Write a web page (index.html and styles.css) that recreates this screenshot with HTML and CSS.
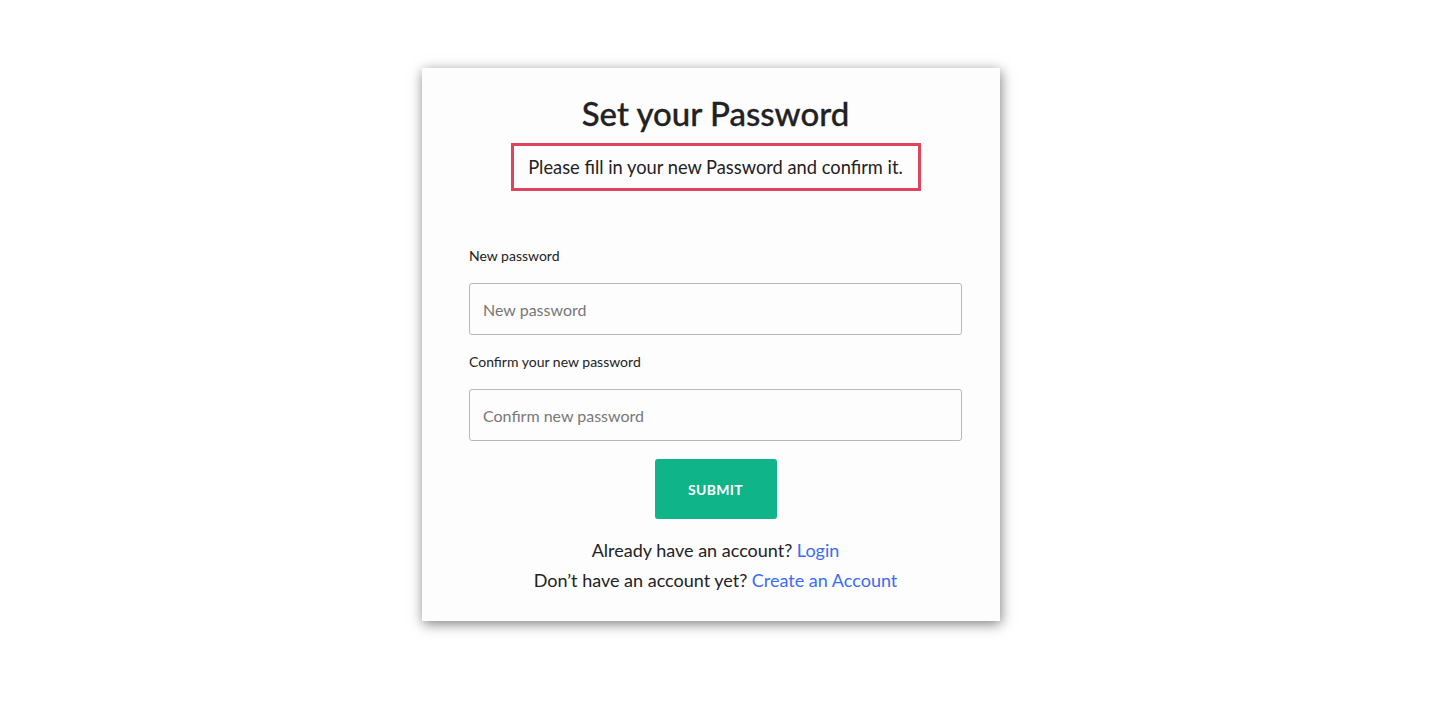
FILE: index.html
```html
<!DOCTYPE html>
<html lang="en">
<head>
<meta charset="utf-8">
<title>Set your Password</title>
<link rel="stylesheet" href="styles.css">
</head>
<body>
<div class="page">
  <div class="card">
    <h1 class="title">Set your Password</h1>
    <div class="notice">Please fill in your new Password and confirm it.</div>
    <form class="form">
      <label class="label" for="pw">New password</label>
      <input class="input" id="pw" type="password" placeholder="New password">
      <label class="label" for="pw2">Confirm your new password</label>
      <input class="input" id="pw2" type="password" placeholder="Confirm new password">
      <div class="actions"><button class="submit" type="button">SUBMIT</button></div>
    </form>
    <p class="alt">Already have an account? <a href="#">Login</a></p>
    <p class="alt">Don’t have an account yet? <a href="#">Create an Account</a></p>
  </div>
</div>
</body>
</html>
```
FILE: styles.css
```css
html, body { margin: 0; padding: 0; background: #ffffff; }
body { font-family: Lato, "Liberation Sans", sans-serif; color: #222; }
.page { padding: 68px 0 60px 422px; }
.card {
  box-sizing: border-box;
  width: 578px;
  height: 553px;
  background: #fdfdfd;
  box-shadow: 1px 3px 12px rgba(0,0,0,0.5);
  padding: 24px 38px 0 47px;
  display: flex;
  flex-direction: column;
  align-items: center;
}
.title { margin: 0; font-size: 33px; font-weight: 500; line-height: 42px; color: #222; -webkit-text-stroke: 0.3px #222; }
.notice {
  margin-top: 9px;
  border: 3px solid #e0435c;
  width: 410px;
  height: 48px;
  box-sizing: border-box;
  display: flex; align-items: center; justify-content: center;
  font-size: 18.3px; color: #222;
}
.form { width: 100%; margin-top: 56px; display: flex; flex-direction: column; }
.label { font-size: 14px; color: #222; line-height: 18px; margin-bottom: 18px; }
.input {
  box-sizing: border-box;
  height: 52px; width: 100%;
  border: 1px solid #b8b8b8; border-radius: 3px;
  padding: 0 13px;
  font-family: inherit; font-size: 16px; color: #222;
  background: #fdfdfd;
  margin-bottom: 18px;
}
.input::placeholder { color: #777; }
.actions { display: flex; justify-content: center; margin-top: 0; }
.submit {
  width: 122px; height: 60px;
  background: #0fb488; color: #fff; border: none; border-radius: 3px;
  font-family: inherit; font-weight: 700; font-size: 14px; letter-spacing: 0.3px;
}
.alt { margin: 0; font-size: 18px; line-height: 30px; color: #222; text-align: center; }
.alt:first-of-type { margin-top: 16px; }
.alt a { color: #3b6cf6; text-decoration: none; }
```
